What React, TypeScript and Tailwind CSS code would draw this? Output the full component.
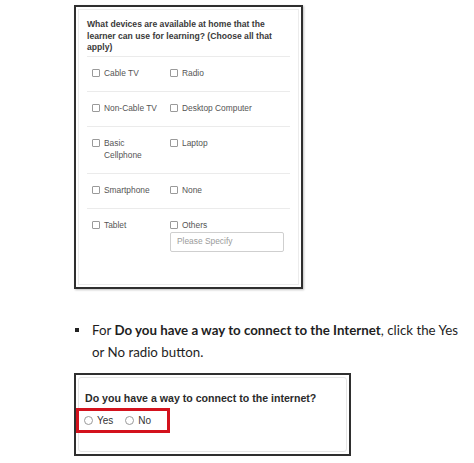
const ui = { fontFamily: '"Liberation Sans", Arial, sans-serif' };
const doc = { fontFamily: 'Lato, "Open Sans", sans-serif' };

function Box() {
  return <span className="inline-block w-[8px] h-[8px] border border-[#9a9a9a] rounded-[1px] bg-white shrink-0" />;
}

function Item({ label }: { label: React.ReactNode }) {
  return (
    <div className="flex items-start gap-[4px]">
      <div className="h-[12px] flex items-center">
        <Box />
      </div>
      <span className="leading-[12px]">{label}</span>
    </div>
  );
}

const rows: [React.ReactNode, string][] = [
  ["Cable TV", "Radio"],
  ["Non-Cable TV", "Desktop Computer"],
  [
    <>
      Basic
      <br />
      Cellphone
    </>,
    "Laptop",
  ],
  ["Smartphone", "None"],
];

export default function App() {
  return (
    <div className="bg-white w-[474px] h-[463px] overflow-hidden" style={ui}>
      {/* Devices card */}
      <div className="ml-[74px] mt-[5px] w-[229px] h-[284px] border-2 border-[#2f2f2f] p-[2px] shadow-[1px_1px_2px_rgba(0,0,0,0.25)]">
        <div className="h-full border border-[#ececec] px-[8px] text-[8.4px] text-[#555]">
          <p className="pt-[9px] pb-[2px] text-[8.6px] leading-[11.5px] font-bold text-[#3a3a3a]">
            What devices are available at home that the learner can use for learning? (Choose all that apply)
          </p>
          {rows.map(([a, b], i) => (
            <div key={i} className="border-t border-[#ebebeb] pt-[10px] pb-[12px] pl-[5px] grid grid-cols-[78px_1fr]">
              <Item label={a} />
              <Item label={b} />
            </div>
          ))}
          <div className="border-t border-[#ebebeb] pt-[10px] pl-[5px] grid grid-cols-[78px_1fr]">
            <Item label="Tablet" />
            <div>
              <Item label="Others" />
              <div className="mt-[1px] w-[114px] h-[20px] border border-[#cfcfcf] rounded-[2px] flex items-center px-[6px] text-[#9b9b9b]">
                Please Specify
              </div>
            </div>
          </div>
        </div>
      </div>

      {/* Instruction */}
      <div className="mt-[30px] ml-[74px] flex text-[13.3px] leading-[22px] text-[#1e1e1e]" style={doc}>
        <span className="w-[18px] shrink-0 pt-[9px]">
          <span className="block w-[4px] h-[4px] bg-[#222] ml-[1px]" />
        </span>
        <p className="whitespace-nowrap">
          For <b>Do you have a way to connect to the Internet</b>, click the Yes
          <br />
          or No radio button.
        </p>
      </div>

      {/* Internet card */}
      <div className="ml-[74px] mt-[10px] w-[277px] h-[83px] border-2 border-[#2f2f2f] p-[2px]">
        <div className="h-full border border-[#e6e6e6] rounded-[3px] pt-[14px]">
          <p className="pl-[6px] text-[10.6px] font-bold text-[#2b2b2b] leading-[13px]">
            Do you have a way to connect to the internet?
          </p>
          <div className="-ml-[3px] mt-[3px] w-[94px] h-[25px] border-[3px] border-[#d3121d] flex items-center gap-[4px] pl-[5px] text-[10px] text-[#333]">
            <span className="w-[9px] h-[9px] rounded-full border border-[#9a9a9a]" />
            <span className="mr-[8px]">Yes</span>
            <span className="w-[9px] h-[9px] rounded-full border border-[#9a9a9a]" />
            <span>No</span>
          </div>
        </div>
      </div>
    </div>
  );
}
